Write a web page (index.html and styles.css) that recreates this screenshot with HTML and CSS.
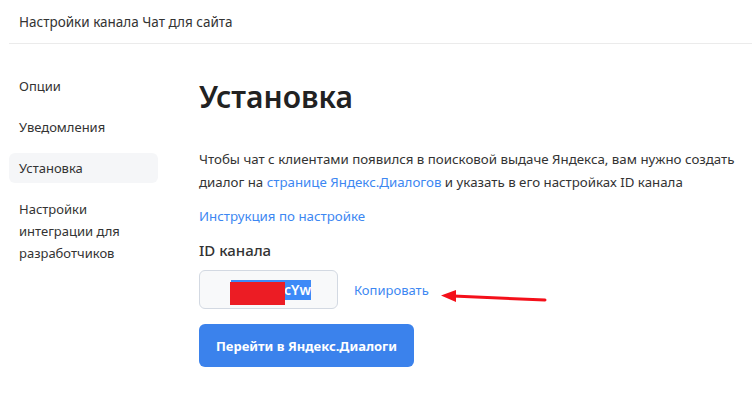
FILE: index.html
```html
<!DOCTYPE html>
<html lang="ru">
<head>
<meta charset="utf-8">
<title>Настройки канала Чат для сайта</title>
<link rel="stylesheet" href="styles.css">
</head>
<body>
<header class="header">Настройки канала Чат для сайта</header>
<div class="layout">
  <nav class="sidebar">
    <a class="nav-item">Опции</a>
    <a class="nav-item">Уведомления</a>
    <a class="nav-item active">Установка</a>
    <a class="nav-item">Настройки интеграции для разработчиков</a>
  </nav>
  <main class="content">
    <h1 class="title">Установка</h1>
    <p class="text">Чтобы чат с клиентами появился в поисковой выдаче Яндекса, вам нужно создать диалог на <a class="link">странице Яндекс.Диалогов</a> и указать в его настройках ID канала</p>
    <p class="text"><a class="link">Инструкция по настройке</a></p>
    <h2 class="label">ID канала</h2>
    <div class="id-row">
      <div class="id-box">
        <span class="selected">cYw</span>
        <span class="redact"></span>
      </div>
      <a class="link copy">Копировать</a>
    </div>
    <button class="btn">Перейти в Яндекс.Диалоги</button>
  </main>
</div>
<svg class="arrow" width="120" height="20" viewBox="0 0 120 20">
  <line x1="12" y1="7" x2="104" y2="11" stroke="#f4101a" stroke-width="3" stroke-linecap="round"/>
  <polygon points="0,6.5 15,1 15,13" fill="#f4101a"/>
</svg>
</body>
</html>
```
FILE: styles.css
```css
* { box-sizing: border-box; }
body {
  margin: 0;
  font-family: "Noto Sans", "Open Sans", sans-serif;
  color: #333;
  background: #fff;
  position: relative;
  width: 752px;
  height: 402px;
  overflow: hidden;
}
.header {
  margin-left: 9px;
  height: 44px;
  padding: 0 10px;
  display: flex;
  align-items: center;
  font-size: 13.5px;
  color: #333;
  border-bottom: 1px solid #ebebeb;
}
.layout {
  display: flex;
  padding-left: 9px;
}
.sidebar {
  width: 149px;
  margin-top: 27px;
  display: flex;
  flex-direction: column;
  gap: 11px;
}
.nav-item {
  display: block;
  padding: 4px 10px;
  font-size: 13px;
  line-height: 22px;
  color: #333;
  border-radius: 6px;
}
.nav-item.active { background: #f5f6f8; }
.content {
  margin-left: 41px;
  padding-top: 35px;
}
.title {
  margin: 0;
  font-size: 30px;
  line-height: 36px;
  font-weight: 600;
  color: #222;
}
.text {
  margin: 33px 0 0;
  font-size: 13.3px;
  line-height: 23px;
  color: #333;
  width: 545px;
}
.text + .text { margin-top: 11px; }
.link { color: #3d87f2; text-decoration: none; }
.label {
  margin: 11px 0 0;
  font-size: 15px;
  line-height: 23px;
  font-weight: 500;
  color: #333;
}
.id-row {
  margin-top: 8px;
  display: flex;
  align-items: center;
  gap: 16px;
}
.id-box {
  position: relative;
  width: 139px;
  height: 39px;
  border: 1px solid #d3d9e2;
  border-radius: 6px;
  background: #f8f9fa;
  display: flex;
  align-items: center;
  justify-content: center;
  padding-left: 5px;
}
.selected {
  display: block;
  width: 80px;
  height: 20px;
  line-height: 20px;
  background: #3d8af7;
  color: #fff;
  font-size: 14px;
  font-weight: 600;
  text-align: right;
}
.redact {
  position: absolute;
  left: 30px;
  top: 11px;
  width: 55px;
  height: 23px;
  background: #ec1c24;
}
.copy { font-size: 13px; }
.btn {
  margin-top: 15px;
  width: 215px;
  height: 43px;
  border: none;
  border-radius: 6px;
  background: #3b82ec;
  color: #fff;
  font-family: inherit;
  font-size: 13px;
  font-weight: 700;
  display: block;
}
.arrow {
  position: absolute;
  left: 441px;
  top: 289px;
}
```
